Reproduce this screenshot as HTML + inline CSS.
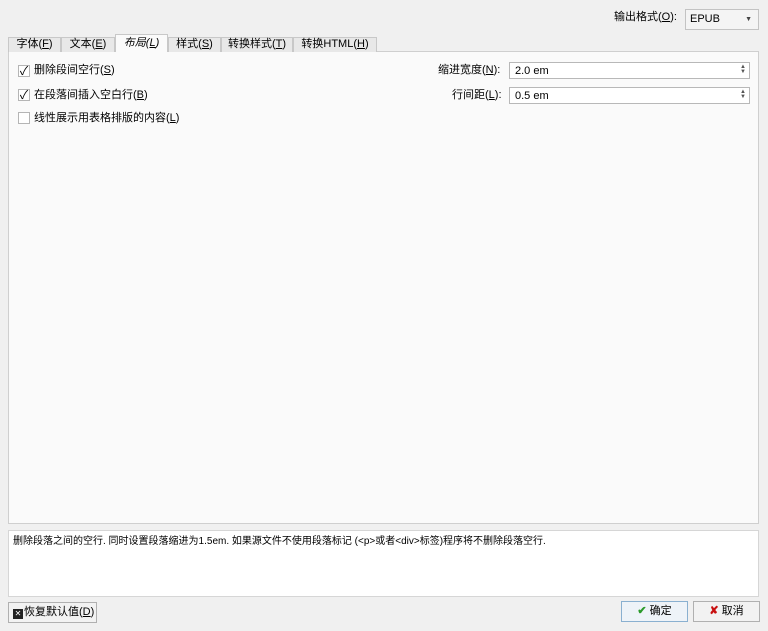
<!DOCTYPE html>
<html><head><meta charset="utf-8"><style>
*{box-sizing:border-box;margin:0;padding:0}
body{width:768px;height:631px;background:#f0f0f0;font-family:"Liberation Sans","Noto Sans CJK SC",sans-serif;font-size:11px;color:#000;position:relative;overflow:hidden;line-height:13px}
.a{position:absolute}
.tab{position:absolute;top:37px;height:15px;border:1px solid #c8c8c8;border-bottom:none;background:#e8e8e8;text-align:center;line-height:13px}
.cb{position:absolute;left:18px;width:12px;height:12px;border:1px solid #b5b5b5;background:#fff;font-size:12px;line-height:10px;text-align:center}
.spin{position:absolute;height:17px;background:#fff;border:1px solid #b8b8b8;padding-left:5px;line-height:16px}
.arr{position:absolute;right:3px;font-size:6px;line-height:5px;color:#555}
.btn{position:absolute;height:21px;border:1px solid #b0b0b0;background:#f2f2f2;line-height:18px}
</style></head><body>
<div class="a" style="left:614px;top:11px">输出格式(<u>O</u>):</div>
<div class="a" style="left:685px;top:9px;width:74px;height:21px;border:1px solid #c3c3c3;background:#f4f4f4;padding-left:4px;line-height:19px">EPUB<span class="a" style="right:6px;top:0;font-size:7px;color:#444">▼</span></div>
<div class="a" style="left:8px;top:51px;width:751px;height:473px;border:1px solid #cfcfcf;background:#fafafa"></div>
<div class="tab" style="left:8px;width:53px">字体(<u>F</u>)</div>
<div class="tab" style="left:61px;width:54px">文本(<u>E</u>)</div>
<div class="tab" style="left:115px;width:53px;top:34px;height:18px;background:#fafafa;font-style:italic;line-height:16px">布局(<u>L</u>)</div>
<div class="tab" style="left:168px;width:53px">样式(<u>S</u>)</div>
<div class="tab" style="left:221px;width:72px">转换样式(<u>T</u>)</div>
<div class="tab" style="left:293px;width:84px">转换HTML(<u>H</u>)</div>
<div class="cb" style="top:65px">✓</div><div class="a" style="left:34px;top:64px">删除段间空行(<u>S</u>)</div>
<div class="cb" style="top:89px">✓</div><div class="a" style="left:34px;top:89px">在段落间插入空白行(<u>B</u>)</div>
<div class="cb" style="top:112px"></div><div class="a" style="left:34px;top:112px">线性展示用表格排版的内容(<u>L</u>)</div>
<div class="a" style="left:438px;top:64px">缩进宽度(<u>N</u>):</div>
<div class="spin" style="left:509px;top:62px;width:241px">2.0 em<span class="arr" style="top:2px">▲<br>▼</span></div>
<div class="a" style="left:452px;top:89px">行间距(<u>L</u>):</div>
<div class="spin" style="left:509px;top:87px;width:241px">0.5 em<span class="arr" style="top:2px">▲<br>▼</span></div>
<div class="a" style="left:8px;top:530px;width:751px;height:67px;background:#fff;border:1px solid #d6d6d6;padding:4px 4px;font-size:10px">删除段落之间的空行. 同时设置段落缩进为1.5em. 如果源文件不使用段落标记 (&lt;p&gt;或者&lt;div&gt;标签)程序将不删除段落空行.</div>
<div class="btn" style="left:8px;top:602px;width:89px;padding-left:4px"><span style="display:inline-block;width:10px;height:10px;background:#222;color:#fff;font-size:8px;line-height:10px;text-align:center;vertical-align:-1px;margin-right:1px">✕</span>恢复默认值(<u>D</u>)</div>
<div class="btn" style="left:621px;top:601px;width:67px;border-color:#8ab0d0;background:#eef3f8;text-align:center"><span style="color:#2a9a2a;font-weight:bold">✔</span> 确定</div>
<div class="btn" style="left:693px;top:601px;width:67px;text-align:center"><span style="color:#c81010;font-weight:bold">✘</span> 取消</div>
</body></html>
